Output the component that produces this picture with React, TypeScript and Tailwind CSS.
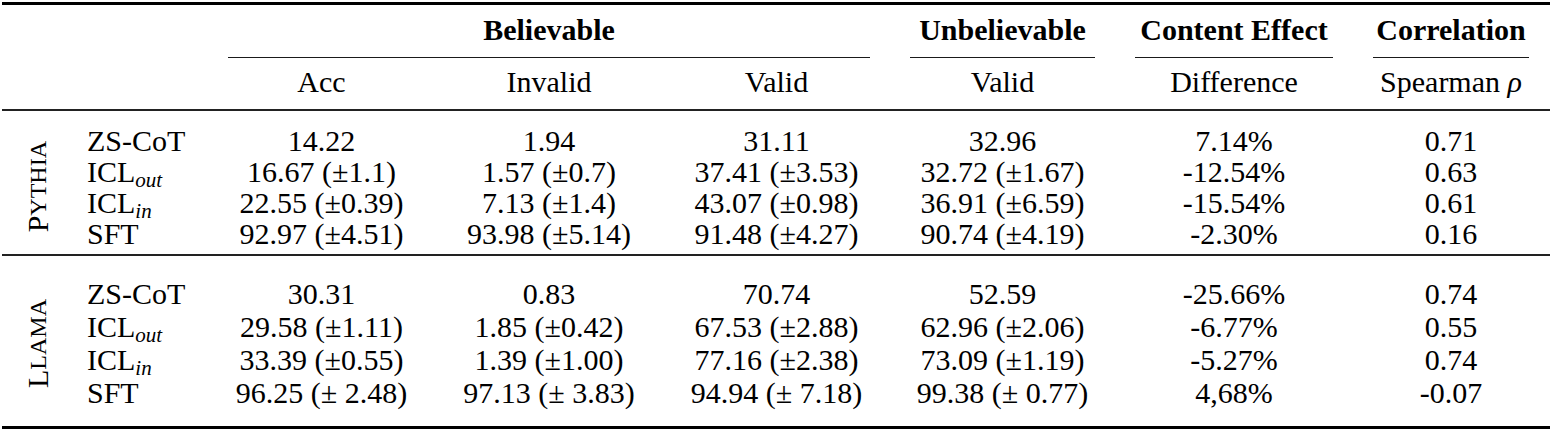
import React from 'react';

// ─── Data ─────────────────────────────────────────────────────────────────────
type Row = { method: string; sub?: string; cells: string[] };

const pythia: Row[] = [
  { method: 'ZS-CoT', cells: ['14.22', '1.94', '31.11', '32.96', '7.14%', '0.71'] },
  { method: 'ICL', sub: 'out', cells: ['16.67 (±1.1)', '1.57 (±0.7)', '37.41 (±3.53)', '32.72 (±1.67)', '-12.54%', '0.63'] },
  { method: 'ICL', sub: 'in', cells: ['22.55 (±0.39)', '7.13 (±1.4)', '43.07 (±0.98)', '36.91 (±6.59)', '-15.54%', '0.61'] },
  { method: 'SFT', cells: ['92.97 (±4.51)', '93.98 (±5.14)', '91.48 (±4.27)', '90.74 (±4.19)', '-2.30%', '0.16'] },
];

const llama: Row[] = [
  { method: 'ZS-CoT', cells: ['30.31', '0.83', '70.74', '52.59', '-25.66%', '0.74'] },
  { method: 'ICL', sub: 'out', cells: ['29.58 (±1.11)', '1.85 (±0.42)', '67.53 (±2.88)', '62.96 (±2.06)', '-6.77%', '0.55'] },
  { method: 'ICL', sub: 'in', cells: ['33.39 (±0.55)', '1.39 (±1.00)', '77.16 (±2.38)', '73.09 (±1.19)', '-5.27%', '0.74'] },
  { method: 'SFT', cells: ['96.25 (± 2.48)', '97.13 (± 3.83)', '94.94 (± 7.18)', '99.38 (± 0.77)', '4,68%', '-0.07'] },
];

const cols = 'grid grid-cols-[66px_140px_227px_228px_227px_225px_238px_196px]';

// ─── Group ────────────────────────────────────────────────────────────────────
function Group({
  first,
  rest,
  rows,
  className,
  rowClass,
}: {
  first: string;
  rest: string;
  rows: Row[];
  className: string;
  rowClass: string;
}) {
  return (
    <div className={`${cols} ${className}`}>
      <div className="row-span-4 flex items-center justify-center pl-[6px]">
        <span className="[writing-mode:vertical-rl] rotate-180 leading-none whitespace-nowrap">
          {first}
          <span className="uppercase text-[24px]">{rest}</span>
        </span>
      </div>
      {rows.map((r, i) => (
        <React.Fragment key={i}>
          <div className={`pl-[19px] whitespace-nowrap ${rowClass}`}>
            {r.method}
            {r.sub && <sub className="italic text-[21px]">{r.sub}</sub>}
          </div>
          {r.cells.map((c, j) => (
            <div key={j} className={`text-center whitespace-nowrap ${rowClass}`}>
              {c}
            </div>
          ))}
        </React.Fragment>
      ))}
    </div>
  );
}

export default function App() {
  return (
    <div className="w-[1554px] h-[432px] bg-white text-black pt-[2px] pl-[2px] text-[30px] [font-family:'Liberation_Serif','Times_New_Roman',serif]">
      <div className="w-[1548px] flex flex-col">
        {/* top rule */}
        <div className="h-[3px] bg-black" />

        {/* header 1 */}
        <div className={`${cols} mt-[7px] h-[36px] leading-[36px] font-bold`}>
          <div className="col-span-2" />
          <div className="col-span-3 text-center">Believable</div>
          <div className="text-center">Unbelievable</div>
          <div className="text-center">Content Effect</div>
          <div className="text-center">Correlation</div>
        </div>

        {/* cmidrules */}
        <div className={`${cols} mt-[9px] h-[1px]`}>
          <div className="col-span-2" />
          <div className="col-span-3 mx-[20px] bg-[#1a1a1a]" />
          <div className="mx-[20px] bg-[#1a1a1a]" />
          <div className="mx-[20px] bg-[#1a1a1a]" />
          <div className="mx-[20px] bg-[#1a1a1a]" />
        </div>

        {/* header 2 */}
        <div className={`${cols} mt-[6px] h-[36px] leading-[36px] text-center`}>
          <div className="col-span-2" />
          <div>Acc</div>
          <div>Invalid</div>
          <div>Valid</div>
          <div>Valid</div>
          <div>Difference</div>
          <div>
            Spearman <span className="italic">ρ</span>
          </div>
        </div>

        <div className="mt-[9px] h-[2px] bg-[#222]" />
        <Group
          first="P"
          rest="ythia"
          rows={pythia}
          className="mt-[14px] grid-rows-[repeat(4,31px)]"
          rowClass="leading-[31px]"
        />
        <div className="mt-[5px] h-[2px] bg-[#222]" />
        <Group
          first="L"
          rest="lama"
          rows={llama}
          className="mt-[21px] grid-rows-[repeat(4,33px)]"
          rowClass="leading-[33px]"
        />

        {/* bottom rule */}
        <div className="mt-[17px] h-[3px] bg-black" />
      </div>
    </div>
  );
}
